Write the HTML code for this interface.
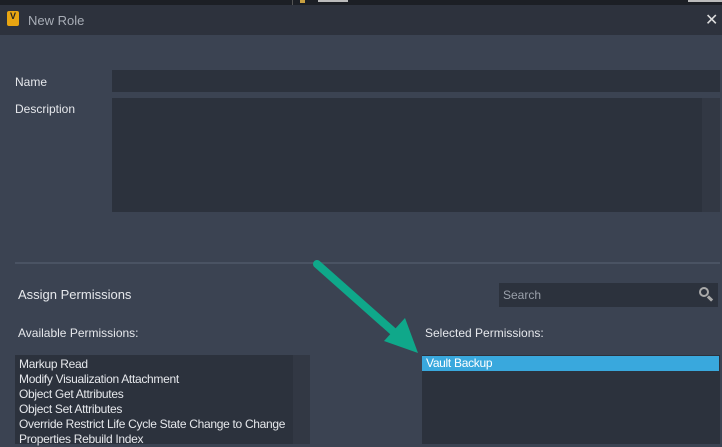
<!DOCTYPE html>
<html><head><style>
*{margin:0;padding:0;box-sizing:border-box}
body{width:722px;height:444px;overflow:hidden;background:#3b4352;font-family:"Liberation Sans",sans-serif;font-size:12px;color:#e6e8ec;position:relative}
.a{position:absolute}
.f{background:#2c323d}
.lst div{height:15px;line-height:15px;padding-left:4px;white-space:nowrap;letter-spacing:-0.3px}
</style></head><body>
<div class="a" style="left:0;top:0;width:722px;height:5px;background:#1c1f25"></div>
<div class="a" style="left:292px;top:0;width:1px;height:5px;background:#555"></div>
<div class="a" style="left:300px;top:0;width:5px;height:3px;background:#c9a040"></div>
<div class="a" style="left:318px;top:0;width:30px;height:2px;background:#bbb"></div>
<div class="a" style="left:688px;top:0;width:34px;height:2px;background:#bbb"></div>
<div class="a" style="left:0;top:5px;width:722px;height:30px;background:#2d323d"></div>
<div class="a" style="left:7px;top:11px;width:12px;height:15px;background:#e8a512;border-radius:2px"></div>
<div class="a" style="left:10px;top:11px;font-size:9px;font-weight:bold;color:#222">V</div>
<div class="a" style="left:28px;top:13px;font-size:13px;color:#a8adb6">New Role</div>
<div class="a" style="left:705px;top:10px;font-size:16px;color:#ddd">✕</div>
<div class="a" style="left:15px;top:75px">Name</div>
<div class="a f" style="left:112px;top:70px;width:608px;height:22px"></div>
<div class="a" style="left:15px;top:102px">Description</div>
<div class="a f" style="left:112px;top:98px;width:608px;height:114px"></div>
<div class="a" style="left:702px;top:98px;width:18px;height:114px;background:#323844"></div>
<div class="a" style="left:15px;top:262px;width:705px;height:2px;background:#4a5363"></div>
<div class="a" style="left:18px;top:287px;font-size:13px">Assign Permissions</div>
<div class="a f" style="left:499px;top:283px;width:219px;height:24px"></div>
<div class="a" style="left:503px;top:288px;color:#9aa0aa">Search</div>
<div class="a" style="left:699px;top:287px;width:10px;height:10px;border:2px solid #aaa;border-radius:50%"></div>
<div class="a" style="left:707px;top:297px;width:6px;height:3px;background:#aaa;transform:rotate(45deg)"></div>
<div class="a" style="left:18px;top:326px">Available Permissions:</div>
<div class="a" style="left:425px;top:326px">Selected Permissions:</div>
<div class="a f lst" style="left:15px;top:355px;width:295px;height:89px;padding-top:2px">
<div>Markup Read</div><div>Modify Visualization Attachment</div><div>Object Get Attributes</div><div>Object Set Attributes</div><div>Override Restrict Life Cycle State Change to Change</div><div>Properties Rebuild Index</div></div>
<div class="a" style="left:293px;top:355px;width:17px;height:89px;background:#323844"></div>
<div class="a f lst" style="left:422px;top:355px;width:298px;height:89px;padding-top:1px">
<div style="background:#39a8dd;color:#fff;margin-right:1px">Vault Backup</div></div>
<svg class="a" style="left:0;top:0" width="722" height="444"><line x1="317" y1="264" x2="396" y2="334" stroke="#0fa88a" stroke-width="8" stroke-linecap="round"/><polygon points="405,318 418,353 384,341" fill="#0fa88a"/></svg>
</body></html>
